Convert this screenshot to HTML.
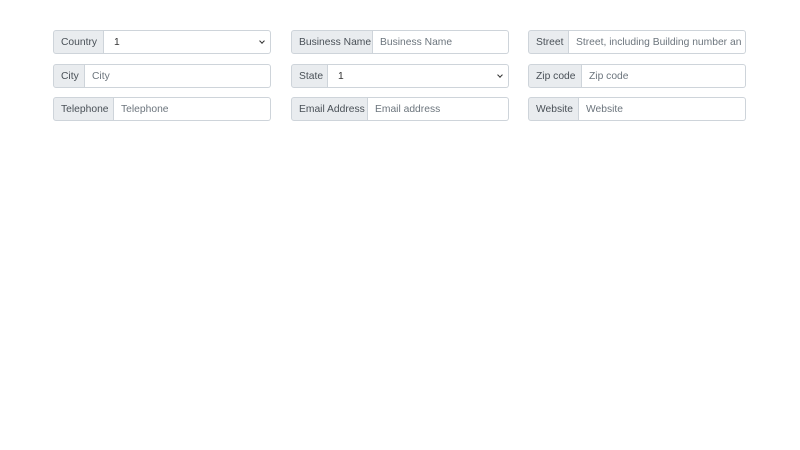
<!DOCTYPE html>
<html><head><style>
body{margin:0;width:800px;height:450px;background:#fff;font-family:"Liberation Sans",sans-serif;font-size:10.3px;color:#495057;position:relative}
.g{position:absolute;width:218px;height:24px;display:flex;box-sizing:border-box}
.a{background:#e9ecef;border:1px solid #ced4da;border-radius:3px 0 0 3px;box-sizing:border-box;height:24px;line-height:24px;padding-left:7px;white-space:nowrap;overflow:hidden;color:#495057}
.i{flex:1;border:1px solid #ced4da;border-left:none;border-radius:0 3px 3px 0;height:24px;box-sizing:border-box;line-height:24px;padding-left:7px;color:#6c757d;white-space:nowrap;overflow:hidden;position:relative}
.s{color:#333;padding-left:10px}
.s:after{content:"";position:absolute;right:6px;top:8px;width:3px;height:3px;border-right:1.2px solid #333;border-bottom:1.2px solid #333;transform:rotate(45deg)}
</style></head><body>
<div class="g" style="left:53px;top:30px"><div class="a" style="width:51px">Country</div><div class="i s">1</div></div>
<div class="g" style="left:291px;top:30px"><div class="a" style="width:82px">Business Name</div><div class="i">Business Name</div></div>
<div class="g" style="left:528px;top:30px"><div class="a" style="width:41px">Street</div><div class="i">Street, including Building number an</div></div>
<div class="g" style="left:53px;top:64px"><div class="a" style="width:32px">City</div><div class="i">City</div></div>
<div class="g" style="left:291px;top:64px"><div class="a" style="width:37px">State</div><div class="i s">1</div></div>
<div class="g" style="left:528px;top:64px"><div class="a" style="width:54px">Zip code</div><div class="i">Zip code</div></div>
<div class="g" style="left:53px;top:97px"><div class="a" style="width:61px">Telephone</div><div class="i">Telephone</div></div>
<div class="g" style="left:291px;top:97px"><div class="a" style="width:77px">Email Address</div><div class="i">Email address</div></div>
<div class="g" style="left:528px;top:97px"><div class="a" style="width:51px">Website</div><div class="i">Website</div></div>
</body></html>
